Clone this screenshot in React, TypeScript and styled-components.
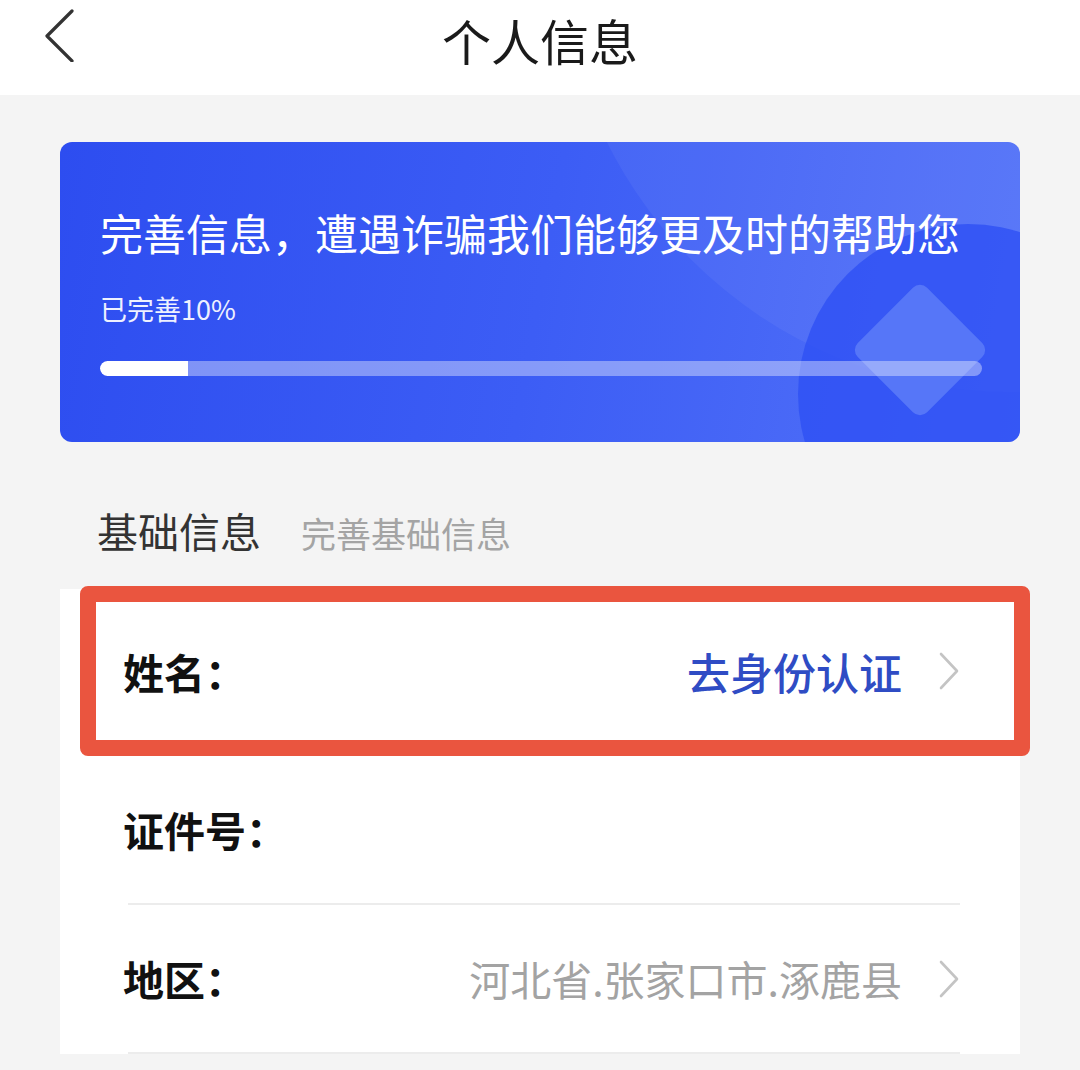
import React, { FC } from "react";
import styled, { createGlobalStyle } from "styled-components";

const GlobalStyle = createGlobalStyle`
  html, body {
    margin: 0;
    padding: 0;
    background: #f4f4f4;
    font-family: "Noto Sans CJK SC", "Noto Sans", sans-serif;
  }
`;

interface IField {
  label: string;
  value?: string;
  tone?: "link" | "muted";
  arrow?: boolean;
  highlight?: boolean;
}

const fields: IField[] = [
  { label: "姓名：", value: "去身份认证", tone: "link", arrow: true, highlight: true },
  { label: "证件号：" },
  { label: "地区：", value: "河北省.张家口市.涿鹿县", tone: "muted", arrow: true },
];

const progress = 10;

const Chevron: FC<{ left?: boolean }> = ({ left }) =>
  left ? (
    <svg width="34" height="54" viewBox="0 0 34 54">
      <path d="M30 3 L5 28 L30 53" fill="none" stroke="#333" strokeWidth="3.2" strokeLinecap="round" strokeLinejoin="round" />
    </svg>
  ) : (
    <svg width="22" height="38" viewBox="0 0 22 38">
      <path d="M3 2 L19 19 L3 36" fill="none" stroke="#c4c4c4" strokeWidth="2.6" strokeLinecap="round" strokeLinejoin="round" />
    </svg>
  );

const App: FC = () => {
  return (
    <Page>
      <GlobalStyle />
      <Header>
        <BackButton>
          <Chevron left />
        </BackButton>
        <HeaderTitle>个人信息</HeaderTitle>
      </Header>

      <Content>
        <Banner>
          <GlowCircle />
          <DarkCircle />
          <Diamond />
          <BannerTitle>完善信息，遭遇诈骗我们能够更及时的帮助您</BannerTitle>
          <BannerSub>已完善{progress}%</BannerSub>
          <ProgressTrack>
            <ProgressFill style={{ width: `${progress}%` }} />
          </ProgressTrack>
        </Banner>

        <SectionHead>
          <SectionTitle>基础信息</SectionTitle>
          <SectionHint>完善基础信息</SectionHint>
        </SectionHead>

        <Card>
          {fields.map((f, i) => (
            <Row key={i} $highlight={!!f.highlight}>
              <Label>{f.label}</Label>
              <Value $tone={f.tone}>{f.value}</Value>
              {f.arrow && (
                <ArrowBox>
                  <Chevron />
                </ArrowBox>
              )}
            </Row>
          ))}
        </Card>
      </Content>
    </Page>
  );
};

const Page = styled.div`
  width: 1080px;
  min-height: 1070px;
  background: #f4f4f4;
  overflow: hidden;
`;

const Header = styled.div`
  position: relative;
  height: 95px;
  background: #ffffff;
  display: flex;
  align-items: center;
  justify-content: center;
`;

const BackButton = styled.div`
  position: absolute;
  left: 42px;
  top: 8px;
  display: flex;
`;

const HeaderTitle = styled.h1`
  margin: 0 0 16px 0;
  font-size: 49px;
  font-weight: 400;
  color: #1a1a1a;
  line-height: 1;
`;

const Content = styled.div`
  padding-top: 47px;
`;

const Banner = styled.div`
  position: relative;
  margin: 0 60px;
  height: 300px;
  border-radius: 12px;
  overflow: hidden;
  background: linear-gradient(100deg, #2d4df0 0%, #3c5df5 50%, #5372f8 100%);
  padding: 68px 40px 0 40px;
  box-sizing: border-box;
  display: flex;
  flex-direction: column;
`;

const GlowCircle = styled.div`
  position: absolute;
  width: 900px;
  height: 900px;
  border-radius: 50%;
  right: -440px;
  top: -650px;
  background: rgba(255, 255, 255, 0.05);
`;

const DarkCircle = styled.div`
  position: absolute;
  width: 340px;
  height: 340px;
  border-radius: 50%;
  left: 738px;
  top: 82px;
  background: #2e50f4;
  opacity: 0.8;
`;

const Diamond = styled.div`
  position: absolute;
  width: 98px;
  height: 98px;
  left: 811px;
  top: 159px;
  border-radius: 10px;
  transform: rotate(45deg);
  background: #5676f8;
`;

const BannerTitle = styled.div`
  position: relative;
  font-size: 43px;
  line-height: 44px;
  color: #ffffff;
  font-weight: 400;
  white-space: nowrap;
`;

const BannerSub = styled.div`
  position: relative;
  margin-top: 40px;
  font-size: 27px;
  line-height: 30px;
  color: #eef1ff;
`;

const ProgressTrack = styled.div`
  position: relative;
  margin-top: 37px;
  width: 882px;
  height: 15px;
  border-radius: 8px;
  background: rgba(255, 255, 255, 0.38);
  overflow: hidden;
`;

const ProgressFill = styled.div`
  height: 100%;
  background: #ffffff;
  border-radius: 8px 0 0 8px;
`;

const SectionHead = styled.div`
  display: flex;
  align-items: baseline;
  gap: 40px;
  margin: 68px 0 38px 97px;
`;

const SectionTitle = styled.div`
  font-size: 41px;
  color: #333333;
  line-height: 1;
`;

const SectionHint = styled.div`
  font-size: 35px;
  color: #a4a4a4;
  line-height: 1;
`;

const Card = styled.div`
  margin: 0 60px;
  background: #ffffff;
  display: flex;
  flex-direction: column;
`;

const Row = styled.div<{ $highlight: boolean }>`
  display: flex;
  align-items: center;
  box-sizing: border-box;
  ${(p) =>
    p.$highlight
      ? `
    height: 170px;
    margin: -3px -10px 0 20px;
    border: 16px solid #ea553f;
    border-radius: 8px;
    padding: 0 54px 0 27px;
    background: #ffffff;
  `
      : `
    height: 149px;
    margin: 0 60px 0 68px;
    border-bottom: 2px solid #ececec;
    padding-left: 0;
    & > :first-child { margin-left: -5px; }
  `}
`;

const Label = styled.div`
  font-size: 41px;
  font-weight: 700;
  color: #111111;
  line-height: 1;
`;

const Value = styled.div<{ $tone?: "link" | "muted" }>`
  margin-left: auto;
  font-size: ${(p) => (p.$tone === "muted" ? "41px" : "43px")};
  font-weight: ${(p) => (p.$tone === "link" ? 500 : 400)};
  color: ${(p) => (p.$tone === "link" ? "#2f4cc4" : "#a3a3a3")};
  line-height: 1;
`;

const ArrowBox = styled.div`
  display: flex;
  margin-left: 36px;
`;

export default App;
